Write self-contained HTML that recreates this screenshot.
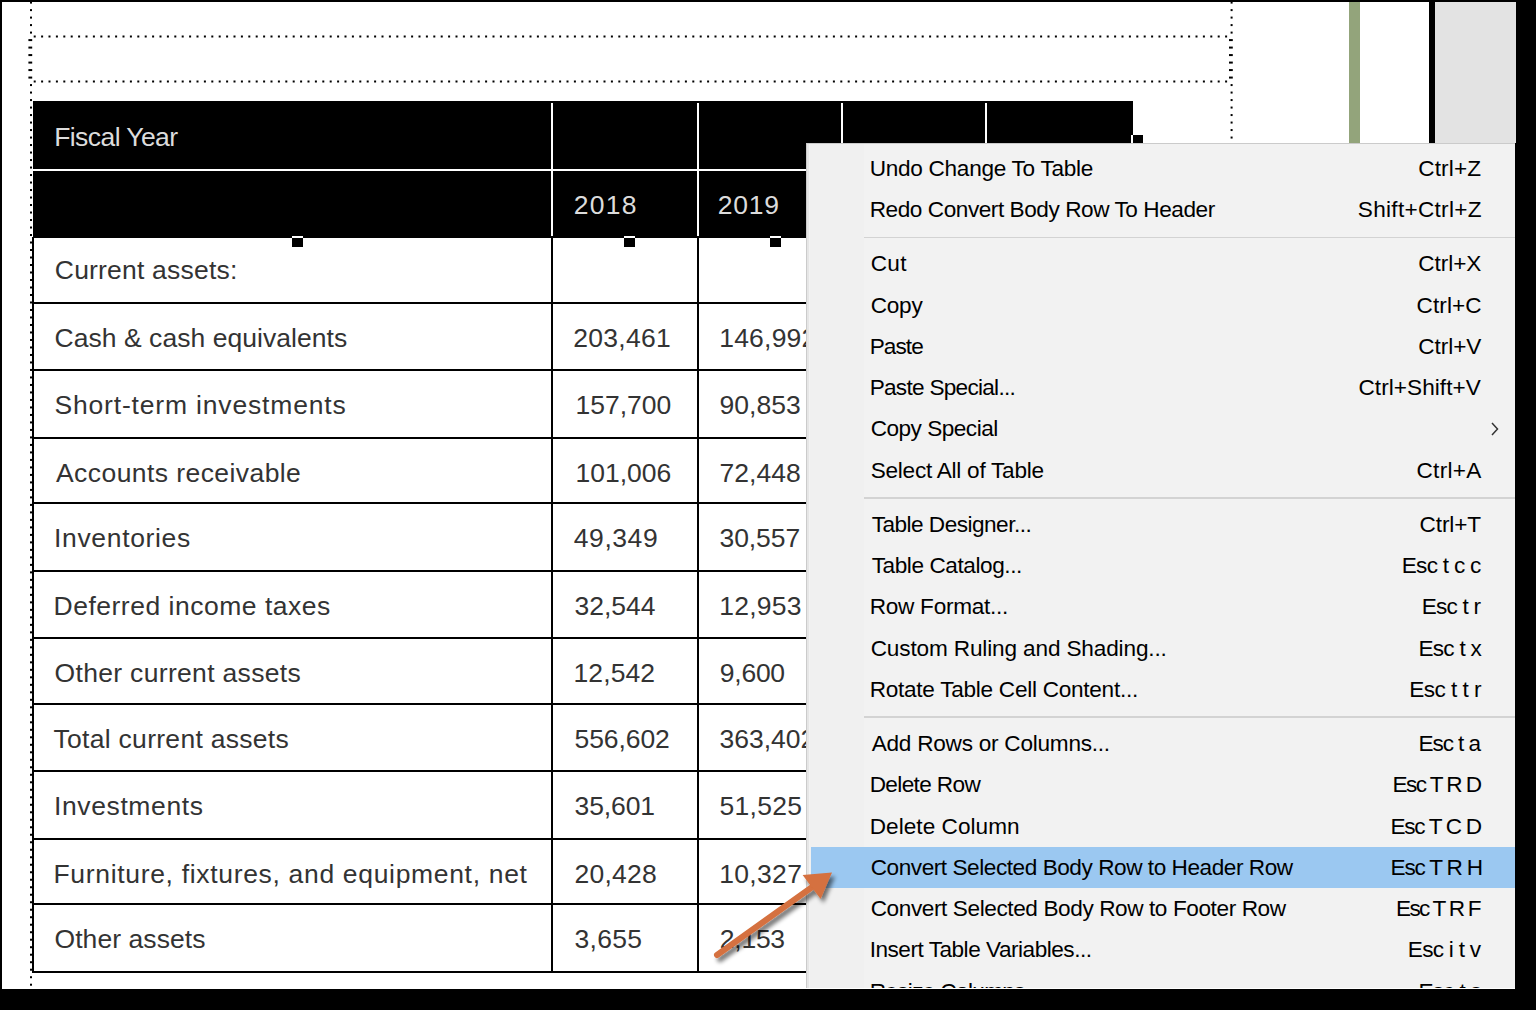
<!DOCTYPE html>
<html><head><meta charset="utf-8">
<style>
html,body{margin:0;padding:0;}
body{width:1536px;height:1010px;background:#000;position:relative;overflow:hidden;font-family:"Liberation Sans",sans-serif;}
#canvas{position:absolute;left:2px;top:2px;width:1513.4px;height:986.6px;background:#fff;}
.b{position:absolute;background:#000;}
.w{position:absolute;background:#fff;}
.tt{position:absolute;white-space:nowrap;font-size:26.5px;color:#333;line-height:30px;height:30px;}
.th{color:#dcdcdc;}
.handle{position:absolute;box-sizing:border-box;background:#000;border:1.5px solid #fff;}
#menu{position:absolute;left:805.8px;top:142.8px;width:708.9px;height:845.3px;background:#f2f2f2;overflow:hidden;}
.mi{position:absolute;height:41.25px;}
.mt{position:absolute;top:0;line-height:41.25px;font-size:22.6px;color:#000;white-space:nowrap;}
.sep{position:absolute;left:58.5px;width:660px;height:1.4px;background:#d3d3d3;}
</style></head>
<body>
<div id="canvas"></div>
<svg width="1536" height="1010" style="position:absolute;left:0;top:0">
<rect x="30.00" y="1.60" width="2" height="2" fill="#000"/>
<rect x="30.00" y="9.10" width="2" height="2" fill="#000"/>
<rect x="30.00" y="16.59" width="2" height="2" fill="#000"/>
<rect x="30.00" y="24.09" width="2" height="2" fill="#000"/>
<rect x="30.00" y="31.59" width="2" height="2" fill="#000"/>
<rect x="28.40" y="39.09" width="3.8" height="2" fill="#000"/>
<rect x="28.40" y="46.58" width="3.8" height="2" fill="#000"/>
<rect x="28.40" y="54.08" width="3.8" height="2" fill="#000"/>
<rect x="28.40" y="61.58" width="3.8" height="2" fill="#000"/>
<rect x="28.40" y="69.07" width="3.8" height="2" fill="#000"/>
<rect x="28.40" y="76.57" width="3.8" height="2" fill="#000"/>
<rect x="30.00" y="84.07" width="2" height="2" fill="#000"/>
<rect x="30.00" y="91.56" width="2" height="2" fill="#000"/>
<rect x="30.00" y="99.06" width="2" height="2" fill="#000"/>
<rect x="30.00" y="106.56" width="2" height="2" fill="#000"/>
<rect x="30.00" y="114.06" width="2" height="2" fill="#000"/>
<rect x="30.00" y="121.55" width="2" height="2" fill="#000"/>
<rect x="30.00" y="129.05" width="2" height="2" fill="#000"/>
<rect x="30.00" y="136.55" width="2" height="2" fill="#000"/>
<rect x="30.00" y="144.04" width="2" height="2" fill="#000"/>
<rect x="30.00" y="151.54" width="2" height="2" fill="#000"/>
<rect x="30.00" y="159.04" width="2" height="2" fill="#000"/>
<rect x="30.00" y="166.53" width="2" height="2" fill="#000"/>
<rect x="30.00" y="174.03" width="2" height="2" fill="#000"/>
<rect x="30.00" y="181.53" width="2" height="2" fill="#000"/>
<rect x="30.00" y="189.03" width="2" height="2" fill="#000"/>
<rect x="30.00" y="196.52" width="2" height="2" fill="#000"/>
<rect x="30.00" y="204.02" width="2" height="2" fill="#000"/>
<rect x="30.00" y="211.52" width="2" height="2" fill="#000"/>
<rect x="30.00" y="219.01" width="2" height="2" fill="#000"/>
<rect x="30.00" y="226.51" width="2" height="2" fill="#000"/>
<rect x="30.00" y="234.01" width="2" height="2" fill="#000"/>
<rect x="30.00" y="241.50" width="2" height="2" fill="#000"/>
<rect x="30.00" y="249.00" width="2" height="2" fill="#000"/>
<rect x="30.00" y="256.50" width="2" height="2" fill="#000"/>
<rect x="30.00" y="264.00" width="2" height="2" fill="#000"/>
<rect x="30.00" y="271.49" width="2" height="2" fill="#000"/>
<rect x="30.00" y="278.99" width="2" height="2" fill="#000"/>
<rect x="30.00" y="286.49" width="2" height="2" fill="#000"/>
<rect x="30.00" y="293.98" width="2" height="2" fill="#000"/>
<rect x="30.00" y="301.48" width="2" height="2" fill="#000"/>
<rect x="30.00" y="308.98" width="2" height="2" fill="#000"/>
<rect x="30.00" y="316.47" width="2" height="2" fill="#000"/>
<rect x="30.00" y="323.97" width="2" height="2" fill="#000"/>
<rect x="30.00" y="331.47" width="2" height="2" fill="#000"/>
<rect x="30.00" y="338.97" width="2" height="2" fill="#000"/>
<rect x="30.00" y="346.46" width="2" height="2" fill="#000"/>
<rect x="30.00" y="353.96" width="2" height="2" fill="#000"/>
<rect x="30.00" y="361.46" width="2" height="2" fill="#000"/>
<rect x="30.00" y="368.95" width="2" height="2" fill="#000"/>
<rect x="30.00" y="376.45" width="2" height="2" fill="#000"/>
<rect x="30.00" y="383.95" width="2" height="2" fill="#000"/>
<rect x="30.00" y="391.44" width="2" height="2" fill="#000"/>
<rect x="30.00" y="398.94" width="2" height="2" fill="#000"/>
<rect x="30.00" y="406.44" width="2" height="2" fill="#000"/>
<rect x="30.00" y="413.94" width="2" height="2" fill="#000"/>
<rect x="30.00" y="421.43" width="2" height="2" fill="#000"/>
<rect x="30.00" y="428.93" width="2" height="2" fill="#000"/>
<rect x="30.00" y="436.43" width="2" height="2" fill="#000"/>
<rect x="30.00" y="443.92" width="2" height="2" fill="#000"/>
<rect x="30.00" y="451.42" width="2" height="2" fill="#000"/>
<rect x="30.00" y="458.92" width="2" height="2" fill="#000"/>
<rect x="30.00" y="466.41" width="2" height="2" fill="#000"/>
<rect x="30.00" y="473.91" width="2" height="2" fill="#000"/>
<rect x="30.00" y="481.41" width="2" height="2" fill="#000"/>
<rect x="30.00" y="488.91" width="2" height="2" fill="#000"/>
<rect x="30.00" y="496.40" width="2" height="2" fill="#000"/>
<rect x="30.00" y="503.90" width="2" height="2" fill="#000"/>
<rect x="30.00" y="511.40" width="2" height="2" fill="#000"/>
<rect x="30.00" y="518.89" width="2" height="2" fill="#000"/>
<rect x="30.00" y="526.39" width="2" height="2" fill="#000"/>
<rect x="30.00" y="533.89" width="2" height="2" fill="#000"/>
<rect x="30.00" y="541.38" width="2" height="2" fill="#000"/>
<rect x="30.00" y="548.88" width="2" height="2" fill="#000"/>
<rect x="30.00" y="556.38" width="2" height="2" fill="#000"/>
<rect x="30.00" y="563.88" width="2" height="2" fill="#000"/>
<rect x="30.00" y="571.37" width="2" height="2" fill="#000"/>
<rect x="30.00" y="578.87" width="2" height="2" fill="#000"/>
<rect x="30.00" y="586.37" width="2" height="2" fill="#000"/>
<rect x="30.00" y="593.86" width="2" height="2" fill="#000"/>
<rect x="30.00" y="601.36" width="2" height="2" fill="#000"/>
<rect x="30.00" y="608.86" width="2" height="2" fill="#000"/>
<rect x="30.00" y="616.35" width="2" height="2" fill="#000"/>
<rect x="30.00" y="623.85" width="2" height="2" fill="#000"/>
<rect x="30.00" y="631.35" width="2" height="2" fill="#000"/>
<rect x="30.00" y="638.84" width="2" height="2" fill="#000"/>
<rect x="30.00" y="646.34" width="2" height="2" fill="#000"/>
<rect x="30.00" y="653.84" width="2" height="2" fill="#000"/>
<rect x="30.00" y="661.34" width="2" height="2" fill="#000"/>
<rect x="30.00" y="668.83" width="2" height="2" fill="#000"/>
<rect x="30.00" y="676.33" width="2" height="2" fill="#000"/>
<rect x="30.00" y="683.83" width="2" height="2" fill="#000"/>
<rect x="30.00" y="691.32" width="2" height="2" fill="#000"/>
<rect x="30.00" y="698.82" width="2" height="2" fill="#000"/>
<rect x="30.00" y="706.32" width="2" height="2" fill="#000"/>
<rect x="30.00" y="713.81" width="2" height="2" fill="#000"/>
<rect x="30.00" y="721.31" width="2" height="2" fill="#000"/>
<rect x="30.00" y="728.81" width="2" height="2" fill="#000"/>
<rect x="30.00" y="736.31" width="2" height="2" fill="#000"/>
<rect x="30.00" y="743.80" width="2" height="2" fill="#000"/>
<rect x="30.00" y="751.30" width="2" height="2" fill="#000"/>
<rect x="30.00" y="758.80" width="2" height="2" fill="#000"/>
<rect x="30.00" y="766.29" width="2" height="2" fill="#000"/>
<rect x="30.00" y="773.79" width="2" height="2" fill="#000"/>
<rect x="30.00" y="781.29" width="2" height="2" fill="#000"/>
<rect x="30.00" y="788.78" width="2" height="2" fill="#000"/>
<rect x="30.00" y="796.28" width="2" height="2" fill="#000"/>
<rect x="30.00" y="803.78" width="2" height="2" fill="#000"/>
<rect x="30.00" y="811.28" width="2" height="2" fill="#000"/>
<rect x="30.00" y="818.77" width="2" height="2" fill="#000"/>
<rect x="30.00" y="826.27" width="2" height="2" fill="#000"/>
<rect x="30.00" y="833.77" width="2" height="2" fill="#000"/>
<rect x="30.00" y="841.26" width="2" height="2" fill="#000"/>
<rect x="30.00" y="848.76" width="2" height="2" fill="#000"/>
<rect x="30.00" y="856.26" width="2" height="2" fill="#000"/>
<rect x="30.00" y="863.75" width="2" height="2" fill="#000"/>
<rect x="30.00" y="871.25" width="2" height="2" fill="#000"/>
<rect x="30.00" y="878.75" width="2" height="2" fill="#000"/>
<rect x="30.00" y="886.25" width="2" height="2" fill="#000"/>
<rect x="30.00" y="893.74" width="2" height="2" fill="#000"/>
<rect x="30.00" y="901.24" width="2" height="2" fill="#000"/>
<rect x="30.00" y="908.74" width="2" height="2" fill="#000"/>
<rect x="30.00" y="916.23" width="2" height="2" fill="#000"/>
<rect x="30.00" y="923.73" width="2" height="2" fill="#000"/>
<rect x="30.00" y="931.23" width="2" height="2" fill="#000"/>
<rect x="30.00" y="938.72" width="2" height="2" fill="#000"/>
<rect x="30.00" y="946.22" width="2" height="2" fill="#000"/>
<rect x="30.00" y="953.72" width="2" height="2" fill="#000"/>
<rect x="30.00" y="961.22" width="2" height="2" fill="#000"/>
<rect x="30.00" y="968.71" width="2" height="2" fill="#000"/>
<rect x="30.00" y="976.21" width="2" height="2" fill="#000"/>
<rect x="30.00" y="983.71" width="2" height="2" fill="#000"/>
<rect x="1230.60" y="1.60" width="2" height="2" fill="#000"/>
<rect x="1230.60" y="9.10" width="2" height="2" fill="#000"/>
<rect x="1230.60" y="16.59" width="2" height="2" fill="#000"/>
<rect x="1230.60" y="24.09" width="2" height="2" fill="#000"/>
<rect x="1230.60" y="31.59" width="2" height="2" fill="#000"/>
<rect x="1229.00" y="39.09" width="3.8" height="2" fill="#000"/>
<rect x="1229.00" y="46.58" width="3.8" height="2" fill="#000"/>
<rect x="1229.00" y="54.08" width="3.8" height="2" fill="#000"/>
<rect x="1229.00" y="61.58" width="3.8" height="2" fill="#000"/>
<rect x="1229.00" y="69.07" width="3.8" height="2" fill="#000"/>
<rect x="1229.00" y="76.57" width="3.8" height="2" fill="#000"/>
<rect x="1230.60" y="84.07" width="2" height="2" fill="#000"/>
<rect x="1230.60" y="91.56" width="2" height="2" fill="#000"/>
<rect x="1230.60" y="99.06" width="2" height="2" fill="#000"/>
<rect x="1230.60" y="106.56" width="2" height="2" fill="#000"/>
<rect x="1230.60" y="114.06" width="2" height="2" fill="#000"/>
<rect x="1230.60" y="121.55" width="2" height="2" fill="#000"/>
<rect x="1230.60" y="129.05" width="2" height="2" fill="#000"/>
<rect x="1230.60" y="136.55" width="2" height="2" fill="#000"/>
<rect x="33.70" y="35.50" width="2" height="2" fill="#000"/>
<rect x="41.10" y="35.50" width="2" height="2" fill="#000"/>
<rect x="48.50" y="35.50" width="2" height="2" fill="#000"/>
<rect x="55.90" y="35.50" width="2" height="2" fill="#000"/>
<rect x="63.30" y="35.50" width="2" height="2" fill="#000"/>
<rect x="70.70" y="35.50" width="2" height="2" fill="#000"/>
<rect x="78.10" y="35.50" width="2" height="2" fill="#000"/>
<rect x="85.50" y="35.50" width="2" height="2" fill="#000"/>
<rect x="92.90" y="35.50" width="2" height="2" fill="#000"/>
<rect x="100.30" y="35.50" width="2" height="2" fill="#000"/>
<rect x="107.70" y="35.50" width="2" height="2" fill="#000"/>
<rect x="115.10" y="35.50" width="2" height="2" fill="#000"/>
<rect x="122.50" y="35.50" width="2" height="2" fill="#000"/>
<rect x="129.90" y="35.50" width="2" height="2" fill="#000"/>
<rect x="137.30" y="35.50" width="2" height="2" fill="#000"/>
<rect x="144.70" y="35.50" width="2" height="2" fill="#000"/>
<rect x="152.10" y="35.50" width="2" height="2" fill="#000"/>
<rect x="159.50" y="35.50" width="2" height="2" fill="#000"/>
<rect x="166.90" y="35.50" width="2" height="2" fill="#000"/>
<rect x="174.30" y="35.50" width="2" height="2" fill="#000"/>
<rect x="181.70" y="35.50" width="2" height="2" fill="#000"/>
<rect x="189.10" y="35.50" width="2" height="2" fill="#000"/>
<rect x="196.50" y="35.50" width="2" height="2" fill="#000"/>
<rect x="203.90" y="35.50" width="2" height="2" fill="#000"/>
<rect x="211.30" y="35.50" width="2" height="2" fill="#000"/>
<rect x="218.70" y="35.50" width="2" height="2" fill="#000"/>
<rect x="226.10" y="35.50" width="2" height="2" fill="#000"/>
<rect x="233.50" y="35.50" width="2" height="2" fill="#000"/>
<rect x="240.90" y="35.50" width="2" height="2" fill="#000"/>
<rect x="248.30" y="35.50" width="2" height="2" fill="#000"/>
<rect x="255.70" y="35.50" width="2" height="2" fill="#000"/>
<rect x="263.10" y="35.50" width="2" height="2" fill="#000"/>
<rect x="270.50" y="35.50" width="2" height="2" fill="#000"/>
<rect x="277.90" y="35.50" width="2" height="2" fill="#000"/>
<rect x="285.30" y="35.50" width="2" height="2" fill="#000"/>
<rect x="292.70" y="35.50" width="2" height="2" fill="#000"/>
<rect x="300.10" y="35.50" width="2" height="2" fill="#000"/>
<rect x="307.50" y="35.50" width="2" height="2" fill="#000"/>
<rect x="314.90" y="35.50" width="2" height="2" fill="#000"/>
<rect x="322.30" y="35.50" width="2" height="2" fill="#000"/>
<rect x="329.70" y="35.50" width="2" height="2" fill="#000"/>
<rect x="337.10" y="35.50" width="2" height="2" fill="#000"/>
<rect x="344.50" y="35.50" width="2" height="2" fill="#000"/>
<rect x="351.90" y="35.50" width="2" height="2" fill="#000"/>
<rect x="359.30" y="35.50" width="2" height="2" fill="#000"/>
<rect x="366.70" y="35.50" width="2" height="2" fill="#000"/>
<rect x="374.10" y="35.50" width="2" height="2" fill="#000"/>
<rect x="381.50" y="35.50" width="2" height="2" fill="#000"/>
<rect x="388.90" y="35.50" width="2" height="2" fill="#000"/>
<rect x="396.30" y="35.50" width="2" height="2" fill="#000"/>
<rect x="403.70" y="35.50" width="2" height="2" fill="#000"/>
<rect x="411.10" y="35.50" width="2" height="2" fill="#000"/>
<rect x="418.50" y="35.50" width="2" height="2" fill="#000"/>
<rect x="425.90" y="35.50" width="2" height="2" fill="#000"/>
<rect x="433.30" y="35.50" width="2" height="2" fill="#000"/>
<rect x="440.70" y="35.50" width="2" height="2" fill="#000"/>
<rect x="448.10" y="35.50" width="2" height="2" fill="#000"/>
<rect x="455.50" y="35.50" width="2" height="2" fill="#000"/>
<rect x="462.90" y="35.50" width="2" height="2" fill="#000"/>
<rect x="470.30" y="35.50" width="2" height="2" fill="#000"/>
<rect x="477.70" y="35.50" width="2" height="2" fill="#000"/>
<rect x="485.10" y="35.50" width="2" height="2" fill="#000"/>
<rect x="492.50" y="35.50" width="2" height="2" fill="#000"/>
<rect x="499.90" y="35.50" width="2" height="2" fill="#000"/>
<rect x="507.30" y="35.50" width="2" height="2" fill="#000"/>
<rect x="514.70" y="35.50" width="2" height="2" fill="#000"/>
<rect x="522.10" y="35.50" width="2" height="2" fill="#000"/>
<rect x="529.50" y="35.50" width="2" height="2" fill="#000"/>
<rect x="536.90" y="35.50" width="2" height="2" fill="#000"/>
<rect x="544.30" y="35.50" width="2" height="2" fill="#000"/>
<rect x="551.70" y="35.50" width="2" height="2" fill="#000"/>
<rect x="559.10" y="35.50" width="2" height="2" fill="#000"/>
<rect x="566.50" y="35.50" width="2" height="2" fill="#000"/>
<rect x="573.90" y="35.50" width="2" height="2" fill="#000"/>
<rect x="581.30" y="35.50" width="2" height="2" fill="#000"/>
<rect x="588.70" y="35.50" width="2" height="2" fill="#000"/>
<rect x="596.10" y="35.50" width="2" height="2" fill="#000"/>
<rect x="603.50" y="35.50" width="2" height="2" fill="#000"/>
<rect x="610.90" y="35.50" width="2" height="2" fill="#000"/>
<rect x="618.30" y="35.50" width="2" height="2" fill="#000"/>
<rect x="625.70" y="35.50" width="2" height="2" fill="#000"/>
<rect x="633.10" y="35.50" width="2" height="2" fill="#000"/>
<rect x="640.50" y="35.50" width="2" height="2" fill="#000"/>
<rect x="647.90" y="35.50" width="2" height="2" fill="#000"/>
<rect x="655.30" y="35.50" width="2" height="2" fill="#000"/>
<rect x="662.70" y="35.50" width="2" height="2" fill="#000"/>
<rect x="670.10" y="35.50" width="2" height="2" fill="#000"/>
<rect x="677.50" y="35.50" width="2" height="2" fill="#000"/>
<rect x="684.90" y="35.50" width="2" height="2" fill="#000"/>
<rect x="692.30" y="35.50" width="2" height="2" fill="#000"/>
<rect x="699.70" y="35.50" width="2" height="2" fill="#000"/>
<rect x="707.10" y="35.50" width="2" height="2" fill="#000"/>
<rect x="714.50" y="35.50" width="2" height="2" fill="#000"/>
<rect x="721.90" y="35.50" width="2" height="2" fill="#000"/>
<rect x="729.30" y="35.50" width="2" height="2" fill="#000"/>
<rect x="736.70" y="35.50" width="2" height="2" fill="#000"/>
<rect x="744.10" y="35.50" width="2" height="2" fill="#000"/>
<rect x="751.50" y="35.50" width="2" height="2" fill="#000"/>
<rect x="758.90" y="35.50" width="2" height="2" fill="#000"/>
<rect x="766.30" y="35.50" width="2" height="2" fill="#000"/>
<rect x="773.70" y="35.50" width="2" height="2" fill="#000"/>
<rect x="781.10" y="35.50" width="2" height="2" fill="#000"/>
<rect x="788.50" y="35.50" width="2" height="2" fill="#000"/>
<rect x="795.90" y="35.50" width="2" height="2" fill="#000"/>
<rect x="803.30" y="35.50" width="2" height="2" fill="#000"/>
<rect x="810.70" y="35.50" width="2" height="2" fill="#000"/>
<rect x="818.10" y="35.50" width="2" height="2" fill="#000"/>
<rect x="825.50" y="35.50" width="2" height="2" fill="#000"/>
<rect x="832.90" y="35.50" width="2" height="2" fill="#000"/>
<rect x="840.30" y="35.50" width="2" height="2" fill="#000"/>
<rect x="847.70" y="35.50" width="2" height="2" fill="#000"/>
<rect x="855.10" y="35.50" width="2" height="2" fill="#000"/>
<rect x="862.50" y="35.50" width="2" height="2" fill="#000"/>
<rect x="869.90" y="35.50" width="2" height="2" fill="#000"/>
<rect x="877.30" y="35.50" width="2" height="2" fill="#000"/>
<rect x="884.70" y="35.50" width="2" height="2" fill="#000"/>
<rect x="892.10" y="35.50" width="2" height="2" fill="#000"/>
<rect x="899.50" y="35.50" width="2" height="2" fill="#000"/>
<rect x="906.90" y="35.50" width="2" height="2" fill="#000"/>
<rect x="914.30" y="35.50" width="2" height="2" fill="#000"/>
<rect x="921.70" y="35.50" width="2" height="2" fill="#000"/>
<rect x="929.10" y="35.50" width="2" height="2" fill="#000"/>
<rect x="936.50" y="35.50" width="2" height="2" fill="#000"/>
<rect x="943.90" y="35.50" width="2" height="2" fill="#000"/>
<rect x="951.30" y="35.50" width="2" height="2" fill="#000"/>
<rect x="958.70" y="35.50" width="2" height="2" fill="#000"/>
<rect x="966.10" y="35.50" width="2" height="2" fill="#000"/>
<rect x="973.50" y="35.50" width="2" height="2" fill="#000"/>
<rect x="980.90" y="35.50" width="2" height="2" fill="#000"/>
<rect x="988.30" y="35.50" width="2" height="2" fill="#000"/>
<rect x="995.70" y="35.50" width="2" height="2" fill="#000"/>
<rect x="1003.10" y="35.50" width="2" height="2" fill="#000"/>
<rect x="1010.50" y="35.50" width="2" height="2" fill="#000"/>
<rect x="1017.90" y="35.50" width="2" height="2" fill="#000"/>
<rect x="1025.30" y="35.50" width="2" height="2" fill="#000"/>
<rect x="1032.70" y="35.50" width="2" height="2" fill="#000"/>
<rect x="1040.10" y="35.50" width="2" height="2" fill="#000"/>
<rect x="1047.50" y="35.50" width="2" height="2" fill="#000"/>
<rect x="1054.90" y="35.50" width="2" height="2" fill="#000"/>
<rect x="1062.30" y="35.50" width="2" height="2" fill="#000"/>
<rect x="1069.70" y="35.50" width="2" height="2" fill="#000"/>
<rect x="1077.10" y="35.50" width="2" height="2" fill="#000"/>
<rect x="1084.50" y="35.50" width="2" height="2" fill="#000"/>
<rect x="1091.90" y="35.50" width="2" height="2" fill="#000"/>
<rect x="1099.30" y="35.50" width="2" height="2" fill="#000"/>
<rect x="1106.70" y="35.50" width="2" height="2" fill="#000"/>
<rect x="1114.10" y="35.50" width="2" height="2" fill="#000"/>
<rect x="1121.50" y="35.50" width="2" height="2" fill="#000"/>
<rect x="1128.90" y="35.50" width="2" height="2" fill="#000"/>
<rect x="1136.30" y="35.50" width="2" height="2" fill="#000"/>
<rect x="1143.70" y="35.50" width="2" height="2" fill="#000"/>
<rect x="1151.10" y="35.50" width="2" height="2" fill="#000"/>
<rect x="1158.50" y="35.50" width="2" height="2" fill="#000"/>
<rect x="1165.90" y="35.50" width="2" height="2" fill="#000"/>
<rect x="1173.30" y="35.50" width="2" height="2" fill="#000"/>
<rect x="1180.70" y="35.50" width="2" height="2" fill="#000"/>
<rect x="1188.10" y="35.50" width="2" height="2" fill="#000"/>
<rect x="1195.50" y="35.50" width="2" height="2" fill="#000"/>
<rect x="1202.90" y="35.50" width="2" height="2" fill="#000"/>
<rect x="1210.30" y="35.50" width="2" height="2" fill="#000"/>
<rect x="1217.70" y="35.50" width="2" height="2" fill="#000"/>
<rect x="1225.10" y="35.50" width="2" height="2" fill="#000"/>
<rect x="33.70" y="80.50" width="2" height="2" fill="#000"/>
<rect x="41.10" y="80.50" width="2" height="2" fill="#000"/>
<rect x="48.50" y="80.50" width="2" height="2" fill="#000"/>
<rect x="55.90" y="80.50" width="2" height="2" fill="#000"/>
<rect x="63.30" y="80.50" width="2" height="2" fill="#000"/>
<rect x="70.70" y="80.50" width="2" height="2" fill="#000"/>
<rect x="78.10" y="80.50" width="2" height="2" fill="#000"/>
<rect x="85.50" y="80.50" width="2" height="2" fill="#000"/>
<rect x="92.90" y="80.50" width="2" height="2" fill="#000"/>
<rect x="100.30" y="80.50" width="2" height="2" fill="#000"/>
<rect x="107.70" y="80.50" width="2" height="2" fill="#000"/>
<rect x="115.10" y="80.50" width="2" height="2" fill="#000"/>
<rect x="122.50" y="80.50" width="2" height="2" fill="#000"/>
<rect x="129.90" y="80.50" width="2" height="2" fill="#000"/>
<rect x="137.30" y="80.50" width="2" height="2" fill="#000"/>
<rect x="144.70" y="80.50" width="2" height="2" fill="#000"/>
<rect x="152.10" y="80.50" width="2" height="2" fill="#000"/>
<rect x="159.50" y="80.50" width="2" height="2" fill="#000"/>
<rect x="166.90" y="80.50" width="2" height="2" fill="#000"/>
<rect x="174.30" y="80.50" width="2" height="2" fill="#000"/>
<rect x="181.70" y="80.50" width="2" height="2" fill="#000"/>
<rect x="189.10" y="80.50" width="2" height="2" fill="#000"/>
<rect x="196.50" y="80.50" width="2" height="2" fill="#000"/>
<rect x="203.90" y="80.50" width="2" height="2" fill="#000"/>
<rect x="211.30" y="80.50" width="2" height="2" fill="#000"/>
<rect x="218.70" y="80.50" width="2" height="2" fill="#000"/>
<rect x="226.10" y="80.50" width="2" height="2" fill="#000"/>
<rect x="233.50" y="80.50" width="2" height="2" fill="#000"/>
<rect x="240.90" y="80.50" width="2" height="2" fill="#000"/>
<rect x="248.30" y="80.50" width="2" height="2" fill="#000"/>
<rect x="255.70" y="80.50" width="2" height="2" fill="#000"/>
<rect x="263.10" y="80.50" width="2" height="2" fill="#000"/>
<rect x="270.50" y="80.50" width="2" height="2" fill="#000"/>
<rect x="277.90" y="80.50" width="2" height="2" fill="#000"/>
<rect x="285.30" y="80.50" width="2" height="2" fill="#000"/>
<rect x="292.70" y="80.50" width="2" height="2" fill="#000"/>
<rect x="300.10" y="80.50" width="2" height="2" fill="#000"/>
<rect x="307.50" y="80.50" width="2" height="2" fill="#000"/>
<rect x="314.90" y="80.50" width="2" height="2" fill="#000"/>
<rect x="322.30" y="80.50" width="2" height="2" fill="#000"/>
<rect x="329.70" y="80.50" width="2" height="2" fill="#000"/>
<rect x="337.10" y="80.50" width="2" height="2" fill="#000"/>
<rect x="344.50" y="80.50" width="2" height="2" fill="#000"/>
<rect x="351.90" y="80.50" width="2" height="2" fill="#000"/>
<rect x="359.30" y="80.50" width="2" height="2" fill="#000"/>
<rect x="366.70" y="80.50" width="2" height="2" fill="#000"/>
<rect x="374.10" y="80.50" width="2" height="2" fill="#000"/>
<rect x="381.50" y="80.50" width="2" height="2" fill="#000"/>
<rect x="388.90" y="80.50" width="2" height="2" fill="#000"/>
<rect x="396.30" y="80.50" width="2" height="2" fill="#000"/>
<rect x="403.70" y="80.50" width="2" height="2" fill="#000"/>
<rect x="411.10" y="80.50" width="2" height="2" fill="#000"/>
<rect x="418.50" y="80.50" width="2" height="2" fill="#000"/>
<rect x="425.90" y="80.50" width="2" height="2" fill="#000"/>
<rect x="433.30" y="80.50" width="2" height="2" fill="#000"/>
<rect x="440.70" y="80.50" width="2" height="2" fill="#000"/>
<rect x="448.10" y="80.50" width="2" height="2" fill="#000"/>
<rect x="455.50" y="80.50" width="2" height="2" fill="#000"/>
<rect x="462.90" y="80.50" width="2" height="2" fill="#000"/>
<rect x="470.30" y="80.50" width="2" height="2" fill="#000"/>
<rect x="477.70" y="80.50" width="2" height="2" fill="#000"/>
<rect x="485.10" y="80.50" width="2" height="2" fill="#000"/>
<rect x="492.50" y="80.50" width="2" height="2" fill="#000"/>
<rect x="499.90" y="80.50" width="2" height="2" fill="#000"/>
<rect x="507.30" y="80.50" width="2" height="2" fill="#000"/>
<rect x="514.70" y="80.50" width="2" height="2" fill="#000"/>
<rect x="522.10" y="80.50" width="2" height="2" fill="#000"/>
<rect x="529.50" y="80.50" width="2" height="2" fill="#000"/>
<rect x="536.90" y="80.50" width="2" height="2" fill="#000"/>
<rect x="544.30" y="80.50" width="2" height="2" fill="#000"/>
<rect x="551.70" y="80.50" width="2" height="2" fill="#000"/>
<rect x="559.10" y="80.50" width="2" height="2" fill="#000"/>
<rect x="566.50" y="80.50" width="2" height="2" fill="#000"/>
<rect x="573.90" y="80.50" width="2" height="2" fill="#000"/>
<rect x="581.30" y="80.50" width="2" height="2" fill="#000"/>
<rect x="588.70" y="80.50" width="2" height="2" fill="#000"/>
<rect x="596.10" y="80.50" width="2" height="2" fill="#000"/>
<rect x="603.50" y="80.50" width="2" height="2" fill="#000"/>
<rect x="610.90" y="80.50" width="2" height="2" fill="#000"/>
<rect x="618.30" y="80.50" width="2" height="2" fill="#000"/>
<rect x="625.70" y="80.50" width="2" height="2" fill="#000"/>
<rect x="633.10" y="80.50" width="2" height="2" fill="#000"/>
<rect x="640.50" y="80.50" width="2" height="2" fill="#000"/>
<rect x="647.90" y="80.50" width="2" height="2" fill="#000"/>
<rect x="655.30" y="80.50" width="2" height="2" fill="#000"/>
<rect x="662.70" y="80.50" width="2" height="2" fill="#000"/>
<rect x="670.10" y="80.50" width="2" height="2" fill="#000"/>
<rect x="677.50" y="80.50" width="2" height="2" fill="#000"/>
<rect x="684.90" y="80.50" width="2" height="2" fill="#000"/>
<rect x="692.30" y="80.50" width="2" height="2" fill="#000"/>
<rect x="699.70" y="80.50" width="2" height="2" fill="#000"/>
<rect x="707.10" y="80.50" width="2" height="2" fill="#000"/>
<rect x="714.50" y="80.50" width="2" height="2" fill="#000"/>
<rect x="721.90" y="80.50" width="2" height="2" fill="#000"/>
<rect x="729.30" y="80.50" width="2" height="2" fill="#000"/>
<rect x="736.70" y="80.50" width="2" height="2" fill="#000"/>
<rect x="744.10" y="80.50" width="2" height="2" fill="#000"/>
<rect x="751.50" y="80.50" width="2" height="2" fill="#000"/>
<rect x="758.90" y="80.50" width="2" height="2" fill="#000"/>
<rect x="766.30" y="80.50" width="2" height="2" fill="#000"/>
<rect x="773.70" y="80.50" width="2" height="2" fill="#000"/>
<rect x="781.10" y="80.50" width="2" height="2" fill="#000"/>
<rect x="788.50" y="80.50" width="2" height="2" fill="#000"/>
<rect x="795.90" y="80.50" width="2" height="2" fill="#000"/>
<rect x="803.30" y="80.50" width="2" height="2" fill="#000"/>
<rect x="810.70" y="80.50" width="2" height="2" fill="#000"/>
<rect x="818.10" y="80.50" width="2" height="2" fill="#000"/>
<rect x="825.50" y="80.50" width="2" height="2" fill="#000"/>
<rect x="832.90" y="80.50" width="2" height="2" fill="#000"/>
<rect x="840.30" y="80.50" width="2" height="2" fill="#000"/>
<rect x="847.70" y="80.50" width="2" height="2" fill="#000"/>
<rect x="855.10" y="80.50" width="2" height="2" fill="#000"/>
<rect x="862.50" y="80.50" width="2" height="2" fill="#000"/>
<rect x="869.90" y="80.50" width="2" height="2" fill="#000"/>
<rect x="877.30" y="80.50" width="2" height="2" fill="#000"/>
<rect x="884.70" y="80.50" width="2" height="2" fill="#000"/>
<rect x="892.10" y="80.50" width="2" height="2" fill="#000"/>
<rect x="899.50" y="80.50" width="2" height="2" fill="#000"/>
<rect x="906.90" y="80.50" width="2" height="2" fill="#000"/>
<rect x="914.30" y="80.50" width="2" height="2" fill="#000"/>
<rect x="921.70" y="80.50" width="2" height="2" fill="#000"/>
<rect x="929.10" y="80.50" width="2" height="2" fill="#000"/>
<rect x="936.50" y="80.50" width="2" height="2" fill="#000"/>
<rect x="943.90" y="80.50" width="2" height="2" fill="#000"/>
<rect x="951.30" y="80.50" width="2" height="2" fill="#000"/>
<rect x="958.70" y="80.50" width="2" height="2" fill="#000"/>
<rect x="966.10" y="80.50" width="2" height="2" fill="#000"/>
<rect x="973.50" y="80.50" width="2" height="2" fill="#000"/>
<rect x="980.90" y="80.50" width="2" height="2" fill="#000"/>
<rect x="988.30" y="80.50" width="2" height="2" fill="#000"/>
<rect x="995.70" y="80.50" width="2" height="2" fill="#000"/>
<rect x="1003.10" y="80.50" width="2" height="2" fill="#000"/>
<rect x="1010.50" y="80.50" width="2" height="2" fill="#000"/>
<rect x="1017.90" y="80.50" width="2" height="2" fill="#000"/>
<rect x="1025.30" y="80.50" width="2" height="2" fill="#000"/>
<rect x="1032.70" y="80.50" width="2" height="2" fill="#000"/>
<rect x="1040.10" y="80.50" width="2" height="2" fill="#000"/>
<rect x="1047.50" y="80.50" width="2" height="2" fill="#000"/>
<rect x="1054.90" y="80.50" width="2" height="2" fill="#000"/>
<rect x="1062.30" y="80.50" width="2" height="2" fill="#000"/>
<rect x="1069.70" y="80.50" width="2" height="2" fill="#000"/>
<rect x="1077.10" y="80.50" width="2" height="2" fill="#000"/>
<rect x="1084.50" y="80.50" width="2" height="2" fill="#000"/>
<rect x="1091.90" y="80.50" width="2" height="2" fill="#000"/>
<rect x="1099.30" y="80.50" width="2" height="2" fill="#000"/>
<rect x="1106.70" y="80.50" width="2" height="2" fill="#000"/>
<rect x="1114.10" y="80.50" width="2" height="2" fill="#000"/>
<rect x="1121.50" y="80.50" width="2" height="2" fill="#000"/>
<rect x="1128.90" y="80.50" width="2" height="2" fill="#000"/>
<rect x="1136.30" y="80.50" width="2" height="2" fill="#000"/>
<rect x="1143.70" y="80.50" width="2" height="2" fill="#000"/>
<rect x="1151.10" y="80.50" width="2" height="2" fill="#000"/>
<rect x="1158.50" y="80.50" width="2" height="2" fill="#000"/>
<rect x="1165.90" y="80.50" width="2" height="2" fill="#000"/>
<rect x="1173.30" y="80.50" width="2" height="2" fill="#000"/>
<rect x="1180.70" y="80.50" width="2" height="2" fill="#000"/>
<rect x="1188.10" y="80.50" width="2" height="2" fill="#000"/>
<rect x="1195.50" y="80.50" width="2" height="2" fill="#000"/>
<rect x="1202.90" y="80.50" width="2" height="2" fill="#000"/>
<rect x="1210.30" y="80.50" width="2" height="2" fill="#000"/>
<rect x="1217.70" y="80.50" width="2" height="2" fill="#000"/>
<rect x="1225.10" y="80.50" width="2" height="2" fill="#000"/>
</svg>
<div style="position:absolute;left:1349px;top:2px;width:11px;height:141px;background:#93a47b"></div>
<div style="position:absolute;left:1429px;top:2px;width:6px;height:141px;background:#000"></div>
<div style="position:absolute;left:1435px;top:2px;width:81px;height:141px;background:#e3e3e3"></div>
<div class="b" style="left:33px;top:101px;width:1100px;height:136.7px"></div>
<div class="w" style="left:33px;top:168.6px;width:1100px;height:2px"></div>
<div class="w" style="left:550.50px;top:103px;width:2px;height:133px"></div>
<div class="w" style="left:696.70px;top:103px;width:2px;height:133px"></div>
<div class="w" style="left:840.80px;top:103px;width:2px;height:133px"></div>
<div class="w" style="left:985.10px;top:103px;width:2px;height:133px"></div>
<div class="b" style="left:33px;top:301.50px;width:1100px;height:2.0px"></div>
<div class="b" style="left:33px;top:369.00px;width:1100px;height:2.0px"></div>
<div class="b" style="left:33px;top:436.50px;width:1100px;height:2.0px"></div>
<div class="b" style="left:33px;top:502.00px;width:1100px;height:2.0px"></div>
<div class="b" style="left:33px;top:569.50px;width:1100px;height:2.0px"></div>
<div class="b" style="left:33px;top:637.00px;width:1100px;height:2.0px"></div>
<div class="b" style="left:33px;top:702.50px;width:1100px;height:2.0px"></div>
<div class="b" style="left:33px;top:770.00px;width:1100px;height:2.0px"></div>
<div class="b" style="left:33px;top:837.50px;width:1100px;height:2.0px"></div>
<div class="b" style="left:33px;top:903.00px;width:1100px;height:2.0px"></div>
<div class="b" style="left:33px;top:970.50px;width:1100px;height:2.0px"></div>
<div class="b" style="left:32.00px;top:237px;width:2.0px;height:735.50px"></div>
<div class="b" style="left:550.50px;top:237px;width:2.0px;height:735.50px"></div>
<div class="b" style="left:696.70px;top:237px;width:2.0px;height:735.50px"></div>
<div class="b" style="left:840.80px;top:237px;width:2.0px;height:735.50px"></div>
<div class="b" style="left:985.10px;top:237px;width:2.0px;height:735.50px"></div>
<div class="b" style="left:1132.00px;top:237px;width:2.0px;height:735.50px"></div>
<div class="tt th" style="left:54.2px;top:121.6px;letter-spacing:-0.570px">Fiscal Year</div>
<div class="tt th" style="left:573.7px;top:190.0px;letter-spacing:1.300px">2018</div>
<div class="tt th" style="left:717.7px;top:190.0px;letter-spacing:0.767px">2019</div>
<div class="tt " style="left:54.8px;top:255.1px;letter-spacing:0.200px">Current assets:</div>
<div class="tt " style="left:54.5px;top:322.5px;letter-spacing:0.050px">Cash &amp; cash equivalents</div>
<div class="tt " style="left:573.2px;top:322.5px;letter-spacing:0.283px">203,461</div>
<div class="tt " style="left:719.2px;top:322.5px;letter-spacing:0.217px">146,992</div>
<div class="tt " style="left:54.5px;top:390.0px;letter-spacing:0.824px">Short-term investments</div>
<div class="tt " style="left:575.4px;top:390.0px;letter-spacing:0.017px">157,700</div>
<div class="tt " style="left:719.5px;top:390.0px;letter-spacing:0.040px">90,853</div>
<div class="tt " style="left:56.0px;top:457.5px;letter-spacing:0.428px">Accounts receivable</div>
<div class="tt " style="left:575.4px;top:457.5px;letter-spacing:0.017px">101,006</div>
<div class="tt " style="left:719.5px;top:457.5px;letter-spacing:0.040px">72,448</div>
<div class="tt " style="left:54.0px;top:523.0px;letter-spacing:0.660px">Inventories</div>
<div class="tt " style="left:573.8px;top:523.0px;letter-spacing:0.560px">49,349</div>
<div class="tt " style="left:719.5px;top:523.0px;letter-spacing:-0.080px">30,557</div>
<div class="tt " style="left:53.5px;top:590.5px;letter-spacing:0.510px">Deferred income taxes</div>
<div class="tt " style="left:574.5px;top:590.5px;letter-spacing:0.000px">32,544</div>
<div class="tt " style="left:719.2px;top:590.5px;letter-spacing:0.260px">12,953</div>
<div class="tt " style="left:54.5px;top:658.0px;letter-spacing:0.326px">Other current assets</div>
<div class="tt " style="left:573.5px;top:658.0px;letter-spacing:0.100px">12,542</div>
<div class="tt " style="left:719.8px;top:658.0px;letter-spacing:-0.250px">9,600</div>
<div class="tt " style="left:53.5px;top:723.5px;letter-spacing:0.289px">Total current assets</div>
<div class="tt " style="left:574.5px;top:723.5px;letter-spacing:-0.083px">556,602</div>
<div class="tt " style="left:719.5px;top:723.5px;letter-spacing:0.000px">363,402</div>
<div class="tt " style="left:54.0px;top:791.0px;letter-spacing:0.610px">Investments</div>
<div class="tt " style="left:574.5px;top:791.0px;letter-spacing:-0.100px">35,601</div>
<div class="tt " style="left:719.5px;top:791.0px;letter-spacing:0.280px">51,525</div>
<div class="tt " style="left:53.5px;top:858.5px;letter-spacing:0.674px">Furniture, fixtures, and equipment, net</div>
<div class="tt " style="left:574.5px;top:858.5px;letter-spacing:0.220px">20,428</div>
<div class="tt " style="left:719.2px;top:858.5px;letter-spacing:0.340px">10,327</div>
<div class="tt " style="left:54.5px;top:924.0px;letter-spacing:0.064px">Other assets</div>
<div class="tt " style="left:574.5px;top:924.0px;letter-spacing:0.300px">3,655</div>
<div class="tt " style="left:719.8px;top:924.0px;letter-spacing:-0.250px">2,153</div>
<div class="w" style="left:292.2px;top:236px;width:11.3px;height:2px"></div>
<div class="b" style="left:292.2px;top:238px;width:11.3px;height:9.3px"></div>
<div class="w" style="left:624px;top:236px;width:11.0px;height:2px"></div>
<div class="b" style="left:624px;top:238px;width:11.0px;height:9.3px"></div>
<div class="w" style="left:770px;top:236px;width:11.0px;height:2px"></div>
<div class="b" style="left:770px;top:238px;width:11.0px;height:9.3px"></div>
<div class="w" style="left:1131.2px;top:134.8px;width:2.1px;height:9px"></div>
<div class="b" style="left:1133.3px;top:134.8px;width:9.4px;height:9px"></div>
<div id="menu">
<div style="position:absolute;left:0;top:0;width:58px;height:847px;background:#f0f0f0"></div>
<div style="position:absolute;left:1.4px;top:0;width:1.4px;height:847px;background:#e6e6e6"></div>
<div style="position:absolute;left:2.8px;top:0;width:1.6px;height:847px;background:#f3f3f3"></div>
<div style="position:absolute;left:0;top:0;width:711px;height:1.4px;background:#cbcbcb"></div>
<div style="position:absolute;left:0;top:0;width:1.4px;height:847px;background:#cbcbcb"></div>
<div class="mt" style="top:5.10px;left:63.9px;letter-spacing:-0.284px">Undo Change To Table</div>
<div class="mt" style="top:5.10px;left:612.4px;letter-spacing:0.160px">Ctrl+Z</div>
<div class="mt" style="top:46.35px;left:63.9px;letter-spacing:-0.443px">Redo Convert Body Row To Header</div>
<div class="mt" style="top:46.35px;left:552.0px;letter-spacing:0.291px">Shift+Ctrl+Z</div>
<div class="sep" style="top:93.90px"></div>
<div class="mt" style="top:100.60px;left:64.9px;letter-spacing:0.300px">Cut</div>
<div class="mt" style="top:100.60px;left:612.4px;letter-spacing:-0.040px">Ctrl+X</div>
<div class="mt" style="top:141.85px;left:64.9px;letter-spacing:-0.233px">Copy</div>
<div class="mt" style="top:141.85px;left:610.7px;letter-spacing:0.100px">Ctrl+C</div>
<div class="mt" style="top:183.10px;left:63.9px;letter-spacing:-0.925px">Paste</div>
<div class="mt" style="top:183.10px;left:612.4px;letter-spacing:-0.040px">Ctrl+V</div>
<div class="mt" style="top:224.35px;left:63.9px;letter-spacing:-0.727px">Paste Special...</div>
<div class="mt" style="top:224.35px;left:552.7px;letter-spacing:0.045px">Ctrl+Shift+V</div>
<div class="mt" style="top:265.60px;left:64.9px;letter-spacing:-0.509px">Copy Special</div>
<svg style="position:absolute;left:685.2px;top:279.60px" width="10" height="16"><polyline points="1,1 6.5,7 1,13" fill="none" stroke="#333" stroke-width="1.5"/></svg>
<div class="mt" style="top:306.85px;left:64.9px;letter-spacing:-0.256px">Select All of Table</div>
<div class="mt" style="top:306.85px;left:610.7px;letter-spacing:0.300px">Ctrl+A</div>
<div class="sep" style="top:354.40px"></div>
<div class="mt" style="top:361.10px;left:65.9px;letter-spacing:-0.519px">Table Designer...</div>
<div class="mt" style="top:361.10px;left:613.7px;letter-spacing:-0.100px">Ctrl+T</div>
<div class="mt" style="top:402.35px;left:65.9px;letter-spacing:-0.427px">Table Catalog...</div>
<div class="mt" style="top:402.35px;left:595.9px;letter-spacing:-0.713px">Esc t c c</div>
<div class="mt" style="top:443.60px;left:63.9px;letter-spacing:-0.267px">Row Format...</div>
<div class="mt" style="top:443.60px;left:615.9px;letter-spacing:-0.783px">Esc t r</div>
<div class="mt" style="top:484.85px;left:64.9px;letter-spacing:-0.148px">Custom Ruling and Shading...</div>
<div class="mt" style="top:484.85px;left:612.7px;letter-spacing:-0.750px">Esc t x</div>
<div class="mt" style="top:526.10px;left:63.9px;letter-spacing:-0.274px">Rotate Table Cell Content...</div>
<div class="mt" style="top:526.10px;left:603.4px;letter-spacing:-0.525px">Esc t t r</div>
<div class="sep" style="top:573.65px"></div>
<div class="mt" style="top:580.35px;left:65.9px;letter-spacing:-0.248px">Add Rows or Columns...</div>
<div class="mt" style="top:580.35px;left:612.7px;letter-spacing:-1.083px">Esc t a</div>
<div class="mt" style="top:621.60px;left:63.9px;letter-spacing:-0.633px">Delete Row</div>
<div class="mt" style="top:621.60px;left:586.6px;letter-spacing:-1.550px">Esc T R D</div>
<div class="mt" style="top:662.85px;left:63.9px;letter-spacing:0.042px">Delete Column</div>
<div class="mt" style="top:662.85px;left:584.8px;letter-spacing:-1.325px">Esc T C D</div>
<div class="mi" style="top:704.20px;height:40.9px;left:5.3px;width:705px;background:#9bc8f1"></div>
<div class="mt" style="top:704.10px;left:64.9px;letter-spacing:-0.450px">Convert Selected Body Row to Header Row</div>
<div class="mt" style="top:704.10px;left:584.8px;letter-spacing:-1.200px">Esc T R H</div>
<div class="mt" style="top:745.35px;left:64.9px;letter-spacing:-0.405px">Convert Selected Body Row to Footer Row</div>
<div class="mt" style="top:745.35px;left:590.3px;letter-spacing:-1.762px">Esc T R F</div>
<div class="mt" style="top:786.60px;left:63.9px;letter-spacing:-0.488px">Insert Table Variables...</div>
<div class="mt" style="top:786.60px;left:602.0px;letter-spacing:-0.725px">Esc i t v</div>
<div class="mt" style="top:827.85px;left:63.9px;letter-spacing:-0.669px">Resize Columns...</div>
<div class="mt" style="top:827.85px;left:612.7px;letter-spacing:-0.750px">Esc t s</div>
</div>
<svg width="1536" height="1010" style="position:absolute;left:0;top:0">
<defs><filter id="sh" x="-20%" y="-20%" width="140%" height="140%"><feGaussianBlur in="SourceAlpha" stdDeviation="2"/><feOffset dx="3" dy="4"/><feComponentTransfer><feFuncA type="linear" slope="0.55"/></feComponentTransfer><feMerge><feMergeNode/><feMergeNode in="SourceGraphic"/></feMerge></filter></defs>
<g filter="url(#sh)">
<line x1="717" y1="955" x2="815" y2="885" stroke="#d5713f" stroke-width="6" stroke-linecap="round"/>
<polygon points="832,872.5 802.6,875 820.6,899" fill="#d5713f"/>
</g></svg>
</body></html>
